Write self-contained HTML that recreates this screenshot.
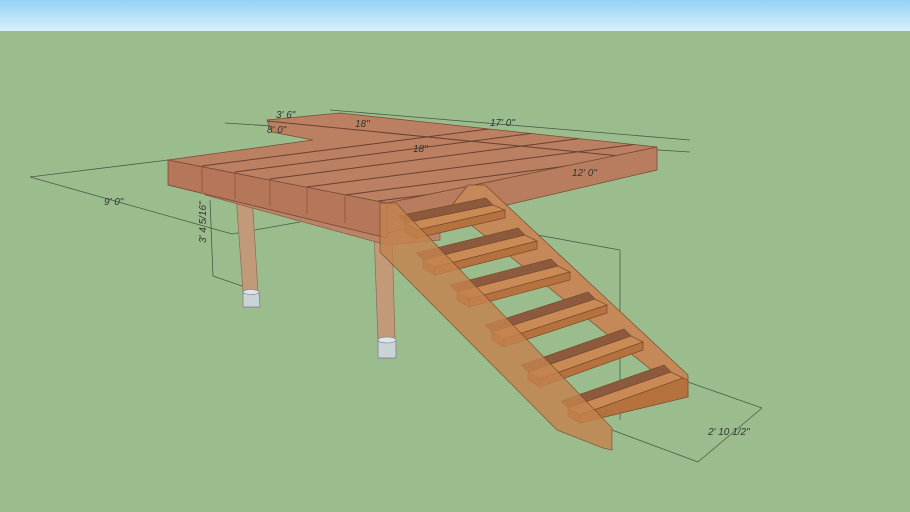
<!DOCTYPE html>
<html><head><meta charset="utf-8"><style>
html,body{margin:0;padding:0;width:910px;height:512px;overflow:hidden;background:#9bbd8d}
svg{display:block}
text{font-family:"Liberation Sans",sans-serif;font-style:italic;font-size:10px;fill:#333}
</style></head><body>
<svg width="910" height="512" viewBox="0 0 910 512" xmlns="http://www.w3.org/2000/svg">
<defs>
<linearGradient id="sky" x1="0" y1="0" x2="0" y2="1"><stop offset="0" stop-color="#92d2f6"/><stop offset="1" stop-color="#d8effa"/></linearGradient>
<clipPath id="top"><polygon points="168,160 387,203 657,147 340,113 267,120 272,132 313,140"/></clipPath>
</defs>
<rect x="0" y="0" width="910" height="31" fill="url(#sky)"/>
<rect x="0" y="31" width="910" height="481" fill="#9bbd8d"/>

<g stroke="#4a5a4a" stroke-width="0.8" fill="none">
<line x1="30" y1="177" x2="232" y2="234"/>
<line x1="30" y1="177" x2="168" y2="160"/>
<line x1="210" y1="200" x2="213" y2="276"/>
<line x1="213" y1="276" x2="242" y2="286"/>
<line x1="232" y1="234" x2="300" y2="222"/>
<line x1="225" y1="123" x2="690" y2="152"/>
<line x1="330" y1="110" x2="690" y2="140"/>
<line x1="482" y1="225" x2="620" y2="250"/>
<line x1="620" y1="250" x2="620" y2="420"/>
<line x1="612" y1="430" x2="698" y2="462"/>
<line x1="688" y1="382" x2="762" y2="408"/>
<line x1="698" y1="462" x2="762" y2="408"/>
</g>

<polygon points="236,195 252,195 258,292 243,292" fill="#c29a7a" stroke="#8a6a55" stroke-width="0.7"/>
<polygon points="243,292 259,292 260,307 243,307" fill="#c9d3d8" stroke="#778" stroke-width="0.7"/>
<ellipse cx="251" cy="292" rx="8" ry="2.5" fill="#dde4e8" stroke="#778" stroke-width="0.6"/>
<polygon points="374,232 392,232 395,340 378,340" fill="#c29a7a" stroke="#8a6a55" stroke-width="0.7"/>
<polygon points="378,340 396,340 396,358 378,358" fill="#c9d3d8" stroke="#778" stroke-width="0.7"/>
<ellipse cx="387" cy="340" rx="9" ry="3" fill="#dde4e8" stroke="#778" stroke-width="0.6"/>

<polygon points="205,182 387,225 440,218 440,240 387,245 205,195" fill="#b98468" stroke="#8a5a42" stroke-width="0.7"/>

<polygon points="168,160 387,203 387,238 168,185" fill="#b5765a" stroke="#7a4a35" stroke-width="0.8"/>
<polygon points="387,203 657,147 657,170 387,233" fill="#b87c5e" stroke="#7a4a35" stroke-width="0.8"/>
<polygon points="168,160 387,203 657,147 340,113 267,120 272,132 313,140" fill="#bb7f62" stroke="#7a4a35" stroke-width="0.8"/>
<g clip-path="url(#top)" stroke="#6a4030" stroke-width="1">
<line x1="202" y1="166" x2="620" y2="112"/>
<line x1="235" y1="172" x2="650" y2="118"/>
<line x1="270" y1="179" x2="690" y2="124"/>
<line x1="307" y1="187" x2="700" y2="136"/>
<line x1="345" y1="195" x2="720" y2="146"/>
<line x1="378" y1="201" x2="740" y2="155"/>
<line x1="267" y1="121" x2="660" y2="160"/>
</g>
<g stroke="#7a4a35" stroke-width="0.6">
<line x1="202" y1="166" x2="202" y2="192"/>
<line x1="235" y1="172" x2="235" y2="199"/>
<line x1="270" y1="179" x2="270" y2="206"/>
<line x1="307" y1="187" x2="307" y2="214"/>
<line x1="345" y1="195" x2="345" y2="223"/>
</g>

<polygon points="468,185 485,185 688,375 688,397 670,385 450,208" fill="#c58858" stroke="#7a4a2a" stroke-width="0.7"/>

<g stroke="#7a4a2a" stroke-width="0.7">
<polygon points="405,223 493,205 486,198 398,216" fill="#8e5a3e"/><polygon points="405,223 417,230 417,238 405,232" fill="#b06a3a"/><polygon points="405,223 493,205 505,210 417,230" fill="#c98a55"/><polygon points="417,230 505,210 505,218 417,238" fill="#b5723f"/>
<polygon points="423,260 525,235 518,228 416,253" fill="#8e5a3e"/><polygon points="423,260 435,267 435,275 423,268" fill="#b06a3a"/><polygon points="423,260 525,235 537,241 435,267" fill="#c98a55"/><polygon points="435,267 537,241 537,249 435,275" fill="#b5723f"/>
<polygon points="457,292 558,266 551,259 450,285" fill="#8e5a3e"/><polygon points="457,292 469,299 469,307 457,300" fill="#b06a3a"/><polygon points="457,292 558,266 570,272 469,299" fill="#c98a55"/><polygon points="469,299 570,272 570,280 469,307" fill="#b5723f"/>
<polygon points="492,332 595,299 588,292 485,325" fill="#8e5a3e"/><polygon points="492,332 504,339 504,347 492,340" fill="#b06a3a"/><polygon points="492,332 595,299 607,305 504,339" fill="#c98a55"/><polygon points="504,339 607,305 607,313 504,347" fill="#b5723f"/>
<polygon points="528,372 631,336 624,329 521,365" fill="#8e5a3e"/><polygon points="528,372 540,379 540,387 528,380" fill="#b06a3a"/><polygon points="528,372 631,336 643,342 540,379" fill="#c98a55"/><polygon points="540,379 643,342 643,350 540,387" fill="#b5723f"/>
<polygon points="568,408 671,372 664,365 561,401" fill="#8e5a3e"/><polygon points="568,408 580,415 580,423 568,416" fill="#b06a3a"/><polygon points="568,408 671,372 683,378 580,415" fill="#c98a55"/><polygon points="580,415 683,378 688,380 688,397 580,423" fill="#b5723f"/>
</g>

<polygon points="380,203 396,203 612,428 612,450 603,448 557,430 380,252" fill="#c4834e" stroke="#7a4a2a" stroke-width="0.8" opacity="0.82"/>

<text x="276" y="118">3' 6"</text>
<text x="267" y="133">8' 0"</text>
<text x="355" y="127">18"</text>
<text x="490" y="126">17' 0"</text>
<text x="413" y="152">18"</text>
<text x="572" y="176">12' 0"</text>
<text x="104" y="205">9' 0"</text>
<text x="206" y="243" transform="rotate(-90 206 243)" font-size="9">3' 4 5/16"</text>
<text x="708" y="435">2' 10 1/2"</text>
</svg>
</body></html>
